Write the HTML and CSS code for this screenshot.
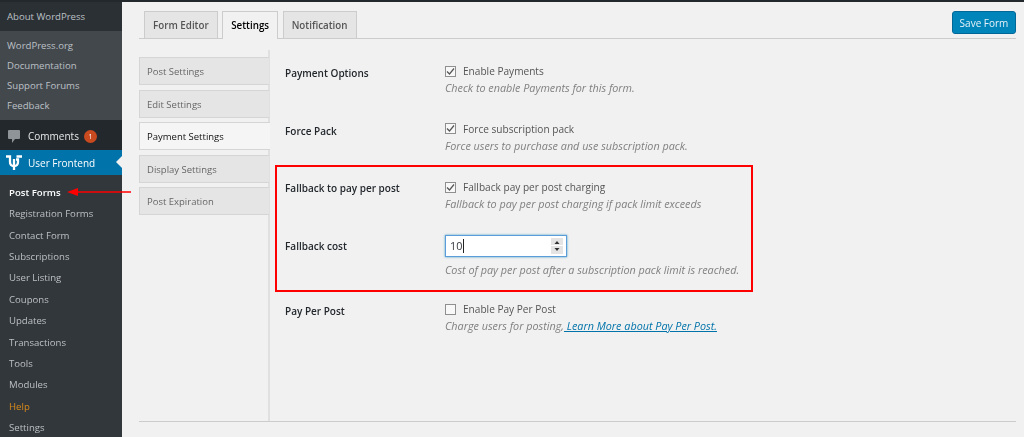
FILE: index.html
```html
<!DOCTYPE html>
<html lang="en">
<head>
<meta charset="utf-8">
<title>Post Forms</title>
<link rel="stylesheet" href="styles.css">
</head>
<body>
<div class="topbar"></div>
<div class="layout">
  <aside class="sidebar">
    <ul class="sub-about"><li>About WordPress</li></ul>
    <ul class="sub-links">
      <li>WordPress.org</li>
      <li>Documentation</li>
      <li>Support Forums</li>
      <li>Feedback</li>
    </ul>
    <div class="menu-item comments">
      <svg class="menu-icon" width="12" height="13" viewBox="0 0 12 13"><path d="M1 0h10a1 1 0 0 1 1 1v7a1 1 0 0 1-1 1H7l-3 4V9H1a1 1 0 0 1-1-1V1a1 1 0 0 1 1-1z" fill="#8f9499"/></svg>
      <span>Comments</span><span class="badge">1</span>
    </div>
    <div class="menu-item current">
      <svg class="menu-logo" width="16" height="15" viewBox="0 0 16 15"><path d="M0 1.500H4V7c0 2.500 1.800 4 4 4s4-1.500 4-4V4.500H10M10.500 1.500H16M8 4V15" fill="none" stroke="#fff" stroke-width="2.300"/></svg>
      <span>User Frontend</span>
    </div>
    <ul class="submenu">
      <li class="active">Post Forms</li>
      <li>Registration Forms</li>
      <li>Contact Form</li>
      <li>Subscriptions</li>
      <li>User Listing</li>
      <li>Coupons</li>
      <li>Updates</li>
      <li>Transactions</li>
      <li>Tools</li>
      <li>Modules</li>
      <li class="help">Help</li>
      <li>Settings</li>
    </ul>
  </aside>
  <main class="main">
    <div class="tabbar">
      <a class="tab">Form Editor</a>
      <a class="tab tab-active">Settings</a>
      <a class="tab">Notification</a>
      <button class="save">Save Form</button>
    </div>
    <div class="panel">
      <ul class="vtabs">
        <li>Post Settings</li>
        <li>Edit Settings</li>
        <li class="vtab-active">Payment Settings</li>
        <li>Display Settings</li>
        <li>Post Expiration</li>
      </ul>
      <div class="form">
        <div class="row">
          <div class="label">Payment Options</div>
          <div class="field">
            <label class="check"><span class="box"><svg width="9" height="9" viewBox="0 0 9 9"><path d="M1 4.500l2.500 2.500L8 1.500" fill="none" stroke="#555" stroke-width="1.200"/></svg></span>Enable Payments</label>
            <p class="desc">Check to enable Payments for this form.</p>
          </div>
        </div>
        <div class="row">
          <div class="label">Force Pack</div>
          <div class="field">
            <label class="check"><span class="box"><svg width="9" height="9" viewBox="0 0 9 9"><path d="M1 4.500l2.500 2.500L8 1.500" fill="none" stroke="#555" stroke-width="1.200"/></svg></span>Force subscription pack</label>
            <p class="desc">Force users to purchase and use subscription pack.</p>
          </div>
        </div>
        <div class="fallback">
          <div class="row row-pay">
            <div class="label">Fallback to pay per post</div>
            <div class="field">
              <label class="check"><span class="box"><svg width="9" height="9" viewBox="0 0 9 9"><path d="M1 4.500l2.500 2.500L8 1.500" fill="none" stroke="#555" stroke-width="1.200"/></svg></span>Fallback pay per post charging</label>
              <p class="desc">Fallback to pay per post charging if pack limit exceeds</p>
            </div>
          </div>
          <div class="row row-cost">
            <div class="label">Fallback cost</div>
            <div class="field">
              <div class="number">
                <span class="number-value">10</span>
                <svg class="spin" width="12" height="16" viewBox="0 0 12 16"><rect width="12" height="16" fill="#e4e4e4"/><path d="M0 7.500h12" stroke="#fff"/><path d="M6 3l2.500 3h-5zM6 13l-2.500-3h5z" fill="#333"/></svg>
              </div>
              <p class="desc desc-cost">Cost of pay per post after a subscription pack limit is reached.</p>
            </div>
          </div>
        </div>
        <div class="row row-last">
          <div class="label">Pay Per Post</div>
          <div class="field">
            <label class="check"><span class="box"></span>Enable Pay Per Post</label>
            <p class="desc">Charge users for posting,<a class="link"> Learn More about Pay Per Post.</a></p>
          </div>
        </div>
      </div>
    </div>
  </main>
</div>
<svg class="arrow" width="64" height="10" viewBox="0 0 64 10"><path d="M64 4.200H11V1L0 5l11 4V5.800h53z" fill="#f00"/></svg>
</body>
</html>
```
FILE: styles.css
```css
* { box-sizing: border-box; }
html, body { margin: 0; height: 437px; overflow: hidden; }
body {
  position: relative;
  background: #f1f1f1;
  font-family: "Open Sans", sans-serif;
  font-size: 10px;
  color: #444;
}
ul { list-style: none; margin: 0; padding: 0; }
p { margin: 0; }

.topbar { height: 2px; background: #23282d; }
.layout { display: flex; height: 435px; filter: blur(0.3px); }

.sidebar { width: 122px; flex: none; background: #32373c; color: #bcc0c5; font-size: 9.600px; }
.sub-about { height: 29px; background: #2b3035; padding: 8px 0 0 7px; }
.sub-links { height: 89px; background: #43484d; padding-top: 5px; }
.sub-links li { height: 20px; line-height: 20px; padding-left: 7px; }
.menu-item { display: flex; align-items: center; color: #e8e8e8; font-size: 10px; }
.comments { height: 30px; background: #23282d; padding: 2px 0 0 8px; }
.menu-icon { margin-right: 8px; }
.badge {
  width: 13px; height: 13px; margin-left: 5px; border-radius: 50%;
  background: #ca4a1f; color: #fff; font-size: 7px; line-height: 13px; text-align: center;
}
.current { position: relative; height: 25px; background: #0073aa; color: #fff; padding-left: 6px; }
.menu-logo { margin-right: 6px; }
.current::after {
  content: ""; position: absolute; right: 0; top: 6px;
  border: 6px solid transparent; border-left-width: 0; border-right-color: #f1f1f1;
}
.submenu { padding-top: 7px; }
.submenu li { height: 21.360px; line-height: 21.360px; padding-left: 9px; }
.submenu .active { color: #fff; font-weight: 600; }
.submenu .help { color: #d98a1a; }

.main { flex: 1; padding: 9px 8px 0 17px; min-width: 0; }
.tabbar {
  display: flex; align-items: flex-start; height: 28px;
  border-bottom: 1px solid #ccc; padding-left: 5px;
}
.tab {
  height: 27px; line-height: 28px; padding: 0 8px; margin-right: 4.500px;
  background: #e5e5e5; border: 1px solid #ccc; border-bottom: 0;
  color: #555; font-size: 9.800px; font-weight: 600;
}
.tab-active { height: 28px; background: #f1f1f1; color: #000; }
.save {
  margin-left: auto; width: 64px; height: 23px; padding: 0;
  background: #0085ba; border: 1px solid #006799; border-radius: 3px;
  color: #e8f2f8; font: 10px "Open Sans", sans-serif;
}

.panel { display: flex; height: 383px; padding-top: 11px; border-bottom: 1px solid #ccc; }
.vtabs { width: 131px; flex: none; padding-top: 7px; border-right: 2px solid #e0e0e0; font-size: 9.500px; }
.vtabs li {
  height: 28px; line-height: 28px; margin-bottom: 4.500px; padding-left: 7px; width: 130px;
  background: #e5e5e5; border: 1px solid #d5d5d5; border-right: 0; color: #666;
}
.vtabs .vtab-active { background: #f5f5f5; color: #111; width: 131px; }

.form { flex: 1; padding: 6px 0 0 15px; }
.row { display: flex; height: 57.500px; padding-top: 5px; }
.label { width: 160px; flex: none; padding-top: 5px; color: #23282d; font-weight: 600; line-height: 14px; }
.check { display: flex; align-items: center; height: 14px; margin-top: 3px; color: #555; font-size: 10.100px; }
.box {
  width: 11px; height: 11px; margin-right: 7px; flex: none;
  display: flex; align-items: center; justify-content: center;
  background: #f8f8f8; border: 1px solid #8f8f8f;
}
.desc { margin-top: 3px; line-height: 14px; color: #808080; font-style: italic; font-size: 10.800px; }
.link { color: #0073aa; text-decoration: underline; }

.fallback {
  width: 478px; height: 127px; margin: -6px 0 0 -10px; padding-left: 8px;
  border: 2px solid #f00;
}
.row-pay { padding-top: 10px; }
.row-pay .label { padding-top: 4px; }
.row-cost { padding-top: 10px; }
.row-cost .label { padding-top: 4px; }
.row-last { padding-top: 7px; }
.number {
  display: flex; align-items: center; justify-content: space-between;
  width: 122px; height: 22px; padding: 0 3px 0 4px;
  background: #fff; border: 1px solid #5b9dd9; box-shadow: 0 0 2px rgba(30,140,190,.8); color: #32373c;
}
.number-value { border-right: 1px solid #222; line-height: 14px; padding-right: 1px; font-size: 10.800px; }
.desc-cost { margin-top: 6px; }

.arrow { position: absolute; left: 67px; top: 187px; }
```
